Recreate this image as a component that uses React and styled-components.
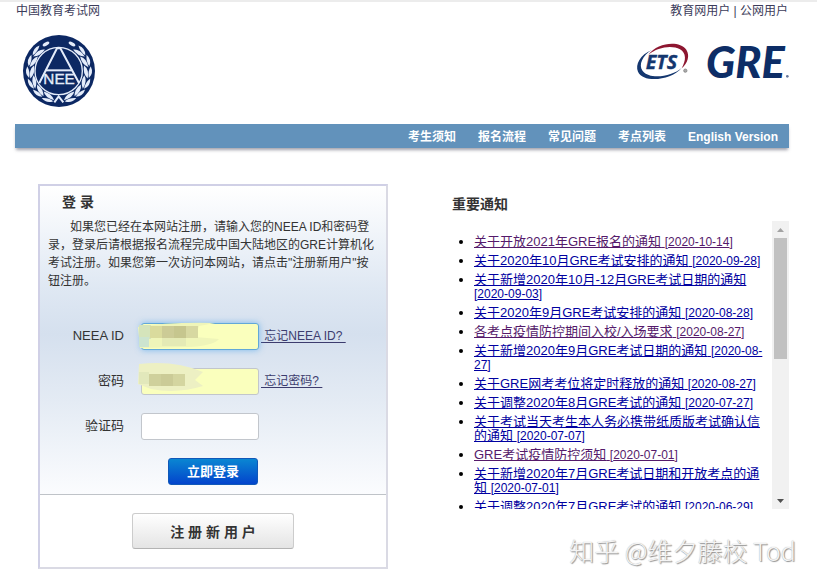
import React, { useRef, useState } from 'react';
import styled, { createGlobalStyle } from 'styled-components';

const GlobalStyle = createGlobalStyle`
    * {
        box-sizing: border-box;
    }

    body {
        margin: 0;
        background-color: #fff;
        font-family: 'Liberation Sans', 'Noto Sans CJK SC', sans-serif;
        font-size: 12px;
        color: #333;
    }
`;

const PageDiv = styled.div`
    position: relative;
    border-top: 2px solid #ececec;
    padding: 0 28px 16px 15px;
`;

const TopBarDiv = styled.div`
    display: flex;
    justify-content: space-between;
    padding: 0 1px;
    line-height: 18px;
    color: #3c3c5a;
`;

const TopLink = styled.a`
    color: inherit;
    text-decoration: none;
`;

const LogoRow = styled.header`
    display: flex;
    justify-content: space-between;
    padding: 15px 0 17px 8px;
`;

const PartnerDiv = styled.div`
    display: flex;
    align-items: flex-start;
    gap: 18px;
    padding-top: 8px;

    & > svg {
        overflow: visible;
    }
`;

const NavBar = styled.nav`
    display: flex;
    justify-content: flex-end;
    gap: 22px;
    padding: 2px 11px 0;
    line-height: 22px;
    background-color: #6292bb;
    box-shadow: 0 3px 3px -1px rgba(70, 70, 90, 0.5);
`;

const NavLink = styled.a`
    color: #fff;
    font-weight: bold;
    text-decoration: none;
`;

const MainDiv = styled.main`
    display: flex;
    align-items: flex-start;
    gap: 64px;
    padding: 36px 0 0 23px;
`;

const LoginSection = styled.section`
    flex: 0 0 350px;
    border: 2px solid #d0d0e6;
    border-right-color: #dadae4;
    border-bottom-color: #dadae4;
`;

const LoginForm = styled.form`
    padding: 6px 8px 9px;
    border-bottom: 1px solid #bfc3c8;
    background: linear-gradient(#fff 0%, #dfe8f3 33%, #d5e0ee 48%, #e4ebf4 70%, #fbfcfe 100%);
`;

const LoginTitle = styled.h2`
    margin: 0;
    padding-left: 14px;
    font-size: 14px;
    font-weight: bold;
    line-height: 20px;
`;

const IntroP = styled.p`
    width: 328px;
    margin: 6px 0 33px;
    text-indent: 22px;
    line-height: 18px;
`;

const FieldDiv = styled.div`
    display: flex;
    align-items: center;
    height: 27px;
    margin-bottom: 18px;
    line-height: 18px;
`;

const FieldLabel = styled.label`
    width: 76px;
    margin-right: 17px;
    padding-bottom: 2px;
    text-align: right;
    font-size: 13px;
`;

const InputWrap = styled.div`
    position: relative;
    width: 118px;
    height: 27px;

    & > svg {
        position: absolute;
        top: -8px;
        left: -4px;
        pointer-events: none;
    }
`;

const FieldInput = styled.input`
    display: block;
    width: 100%;
    height: 100%;
    padding: 0 6px;
    border: 1px solid ${props => props.$active ? '#62a8d8' : '#c2c6cc'};
    border-radius: 3px;
    background-color: ${props => props.$filled ? '#faffbd' : '#fff'};
    box-shadow: ${props => props.$active ? '0 0 6px rgba(82, 168, 236, 0.7)' : 'none'};
    outline: none;
`;

const ForgotLink = styled.a`
    margin-left: 2px;
    padding-bottom: 2px;
    color: #3c3c6e;
    white-space: pre;
    text-underline-offset: 2px;
`;

const SubmitButton = styled.button`
    display: block;
    width: 90px;
    height: 27px;
    margin-left: 120px;
    padding: 0 0 3px;
    border: 1px solid #1058b8;
    border-radius: 3px;
    background: linear-gradient(#0a86d2, #0344cc);
    color: #fff;
    font-family: inherit;
    font-size: 13px;
    font-weight: bold;
`;

const RegisterDiv = styled.div`
    display: flex;
    justify-content: center;
    padding: 18px 0;
`;

const RegisterButton = styled.button`
    width: 162px;
    height: 36px;
    border: 1px solid #ccc;
    border-bottom-color: #b3b3b3;
    border-radius: 3px;
    background: linear-gradient(#fff, #e4e4e4);
    color: #333;
    font-family: inherit;
    font-size: 14px;
    font-weight: bold;
`;

const NoticeSection = styled.section`
    flex: 1;
    min-width: 0;
`;

const NoticeTitle = styled.h2`
    margin: 10px 0 7px;
    font-size: 14px;
    font-weight: bold;
    line-height: 20px;
`;

const ScrollDiv = styled.div`
    display: flex;
    height: 288px;
`;

const NoticeList = styled.ul`
    flex: 1;
    margin: 0;
    padding: 14px 0 0 22px;
    overflow-y: scroll;
    scrollbar-width: none;
    font-size: 13px;
    line-height: 14px;
    color: #000;
`;

const NoticeItem = styled.li`
    margin-bottom: 5px;
`;

const NoticeLink = styled.a`
    color: ${props => props.$visited ? '#551a6b' : '#0000a0'};
`;

const DateSpan = styled.span`
    font-size: 12px;
`;

const ScrollbarDiv = styled.div`
    display: flex;
    flex-direction: column;
    width: 17px;
    background-color: #f1f1f1;
`;

const ArrowButton = styled.button`
    display: flex;
    align-items: center;
    justify-content: center;
    height: 17px;
    padding: 0;
    border: none;
    background-color: transparent;
    color: ${props => props.$dim ? '#a3a3a3' : '#505050'};
`;

const TrackDiv = styled.div`
    flex: 1;
    padding: 0 2px;
`;

const ThumbDiv = styled.div`
    height: 121px;
    background-color: #c1c1c1;
`;

const WatermarkDiv = styled.div`
    position: absolute;
    right: 21px;
    bottom: 17px;
    font-family: 'Noto Sans CJK SC', sans-serif;
    font-size: 25px;
    font-weight: 300;
    line-height: 36px;
    color: #f4f4f4;
    text-shadow: 1px 1px 1px #909090, 0 0 1px #a8a8a8;
    pointer-events: none;
`;

const NAV_ITEMS = ['考生须知', '报名流程', '常见问题', '考点列表', 'English Version'];

const NOTICES = [
    { title: '关于开放2021年GRE报名的通知', date: '2020-10-14', visited: true },
    { title: '关于2020年10月GRE考试安排的通知', date: '2020-09-28' },
    { title: '关于新增2020年10月-12月GRE考试日期的通知', date: '2020-09-03' },
    { title: '关于2020年9月GRE考试安排的通知', date: '2020-08-28' },
    { title: '各考点疫情防控期间入校/入场要求', date: '2020-08-27', visited: true },
    { title: '关于新增2020年9月GRE考试日期的通知', date: '2020-08-27' },
    { title: '关于GRE网考考位将定时释放的通知', date: '2020-08-27' },
    { title: '关于调整2020年8月GRE考试的通知', date: '2020-07-27' },
    { title: '关于考试当天考生本人务必携带纸质版考试确认信的通知', date: '2020-07-07' },
    { title: 'GRE考试疫情防控须知', date: '2020-07-01', visited: true },
    { title: '关于新增2020年7月GRE考试日期和开放考点的通知', date: '2020-07-01' },
    { title: '关于调整2020年7月GRE考试的通知', date: '2020-06-29' },
];

// angles are measured from the bottom of the emblem, mirrored for the other branch
const LEAF_ANGLES = [12, 34, 56, 78, 100, 122];

const Branch = () => (
    <g fill="#e4ecfa">
        {LEAF_ANGLES.map(angle => (
            <g key={angle} transform={`rotate(${angle} 108 108)`}>
                <path d="M112 197 Q100 178 76 178 Q84 196 112 197Z" />
                <path d="M110 200 Q94 192 74 198 Q92 212 110 200Z" />
            </g>
        ))}
        <ellipse cx="69" cy="27" rx="11" ry="5" transform="rotate(-28 69 27)" />
    </g>
);

const NeeaLogo = () => (
    <svg width="72" height="72" viewBox="0 0 216 216" role="img" aria-label="NEEA">
        <circle cx="108" cy="108" r="108" fill="#0c2863" />
        <Branch />
        <g transform="translate(216 0) scale(-1 1)"><Branch /></g>
        <g fill="none" stroke="#e4ecfa" strokeWidth="6">
            <circle cx="107" cy="108" r="71" fill="#0c2863" strokeWidth="4" />
            <path d="M49 144 L102 40 H112 L168 144" />
            <path d="M68 106 H148" />
            <path d="M94 202 L107 184 L121 202" />
        </g>
        <text x="61" y="146" fill="#e4ecfa" stroke="#e4ecfa" strokeWidth="1" fontFamily="Liberation Sans" fontSize="46">NEE</text>
    </svg>
);

const EtsLogo = () => (
    <svg width="53" height="38" viewBox="0 0 159 114" role="img" aria-label="ETS">
        <path d="M48 21 C12 34 -3 66 6 86 C20 120 104 114 137 75 C108 101 41 111 20 84 C6 66 20 36 48 21Z" fill="#14376f" />
        <path d="M37 35 C65 -1 129 -9 151 20 C163 39 154 61 137 76 C151 51 151 31 132 19 C108 5 65 12 37 35Z" fill="#8d1630" />
        <text x="29" y="78" fill="#14376f" stroke="#14376f" strokeWidth="1" fontFamily="Open Sans" fontSize="59" fontWeight="bold" fontStyle="italic">ETS</text>
        <circle cx="148" cy="83" r="5" fill="#aaa" stroke="#777" strokeWidth="2" />
    </svg>
);

const GreLogo = () => (
    <svg width="82" height="38" viewBox="0 0 246 114" role="img" aria-label="GRE">
        <text x="-3" y="105" fill="#0d2d66" fontFamily="Lato" fontSize="130" fontWeight="900" fontStyle="italic">GRE</text>
        <circle cx="241" cy="100" r="4" fill="#66779a" />
    </svg>
);

// mosaic strokes that hide the saved account and password
const IdMosaic = () => (
    <svg width="90" height="36" viewBox="0 0 90 36" aria-hidden="true">
        <path d="M1 12 Q30 7 78 8 L62 11 L58 22 L82 24 Q76 31 50 32 L3 33 Z" fill="#eff5b9" />
        <rect x="2" y="10" width="12" height="14" fill="#d5e4bb" />
        <rect x="2" y="22" width="10" height="10" fill="#cce4cf" />
        <rect x="13" y="11" width="12" height="12" fill="#dadb9d" />
        <rect x="25" y="11" width="12" height="12" fill="#cccb96" />
        <rect x="37" y="11" width="12" height="12" fill="#c6c68e" />
        <rect x="49" y="11" width="12" height="12" fill="#d7d8a1" />
        <rect x="25" y="23" width="24" height="8" fill="#e4eab5" />
    </svg>
);

const PasswordMosaic = () => (
    <svg width="90" height="36" viewBox="0 0 90 36" aria-hidden="true">
        <path d="M2 4 Q38 0 66 12 L58 20 L66 26 Q40 34 14 29 L1 24 Z" fill="#edf0c3" />
        <rect x="2" y="12" width="10" height="12" fill="#e2e8bb" />
        <rect x="12" y="14" width="12" height="12" fill="#cfd09c" />
        <rect x="24" y="14" width="12" height="12" fill="#cbcb97" />
        <rect x="36" y="14" width="12" height="12" fill="#d4d5a0" />
    </svg>
);

const NoticeBoard = () => {

    const listRef = useRef(null);
    const [ratio, setRatio] = useState(0);

    const handleScroll = (e) => {
        const { scrollTop, scrollHeight, clientHeight } = e.target;
        setRatio(scrollHeight > clientHeight ? scrollTop / (scrollHeight - clientHeight) : 0);
    }

    return (
        <NoticeSection>
            <NoticeTitle>重要通知</NoticeTitle>
            <ScrollDiv>
                <NoticeList ref={listRef} onScroll={handleScroll}>
                    {NOTICES.map(notice => (
                        <NoticeItem key={notice.title}>
                            <NoticeLink href="#" $visited={notice.visited}>
                                {notice.title} <DateSpan>[{notice.date}]</DateSpan>
                            </NoticeLink>
                        </NoticeItem>
                    ))}
                </NoticeList>
                <ScrollbarDiv>
                    <ArrowButton type="button" aria-label="向上" $dim={ratio === 0} onClick={() => listRef.current.scrollBy(0, -19)}>
                        <svg width="7" height="4"><path d="M0 4 L3.5 0 L7 4Z" fill="currentColor" /></svg>
                    </ArrowButton>
                    <TrackDiv>
                        <ThumbDiv style={{ transform: `translateY(${ratio * 133}px)` }} />
                    </TrackDiv>
                    <ArrowButton type="button" aria-label="向下" onClick={() => listRef.current.scrollBy(0, 19)}>
                        <svg width="7" height="4"><path d="M0 0 L3.5 4 L7 0Z" fill="currentColor" /></svg>
                    </ArrowButton>
                </ScrollbarDiv>
            </ScrollDiv>
        </NoticeSection>
    );
};

const App = () => {
    return (
        <PageDiv>
            <GlobalStyle />
            <TopBarDiv>
                <TopLink href="#">中国教育考试网</TopLink>
                <div>
                    <TopLink href="#">教育网用户</TopLink> | <TopLink href="#">公网用户</TopLink>
                </div>
            </TopBarDiv>
            <LogoRow>
                <NeeaLogo />
                <PartnerDiv>
                    <EtsLogo />
                    <GreLogo />
                </PartnerDiv>
            </LogoRow>
            <NavBar>
                {NAV_ITEMS.map(item => <NavLink key={item} href="#">{item}</NavLink>)}
            </NavBar>
            <MainDiv>
                <LoginSection>
                    <LoginForm onSubmit={(e) => e.preventDefault()}>
                        <LoginTitle>登 录</LoginTitle>
                        <IntroP>
                            如果您已经在本网站注册，请输入您的NEEA ID和密码登录，登录后请根据报名流程完成中国大陆地区的GRE计算机化考试注册。如果您第一次访问本网站，请点击"注册新用户"按钮注册。
                        </IntroP>
                        <FieldDiv>
                            <FieldLabel htmlFor="neeaId">NEEA ID</FieldLabel>
                            <InputWrap>
                                <FieldInput id="neeaId" type="text" $filled $active />
                                <IdMosaic />
                            </InputWrap>
                            <ForgotLink href="#">{'\u00a0忘记NEEA ID?\u00a0'}</ForgotLink>
                        </FieldDiv>
                        <FieldDiv>
                            <FieldLabel htmlFor="password">密码</FieldLabel>
                            <InputWrap>
                                <FieldInput id="password" type="password" $filled />
                                <PasswordMosaic />
                            </InputWrap>
                            <ForgotLink href="#">{'\u00a0忘记密码?\u00a0'}</ForgotLink>
                        </FieldDiv>
                        <FieldDiv>
                            <FieldLabel htmlFor="captcha">验证码</FieldLabel>
                            <InputWrap>
                                <FieldInput id="captcha" type="text" />
                            </InputWrap>
                        </FieldDiv>
                        <SubmitButton type="submit">立即登录</SubmitButton>
                    </LoginForm>
                    <RegisterDiv>
                        <RegisterButton type="button">注 册 新 用 户</RegisterButton>
                    </RegisterDiv>
                </LoginSection>
                <NoticeBoard />
            </MainDiv>
            <WatermarkDiv>知乎 @维夕藤校 Tod</WatermarkDiv>
        </PageDiv>
    );
};

export default App;
